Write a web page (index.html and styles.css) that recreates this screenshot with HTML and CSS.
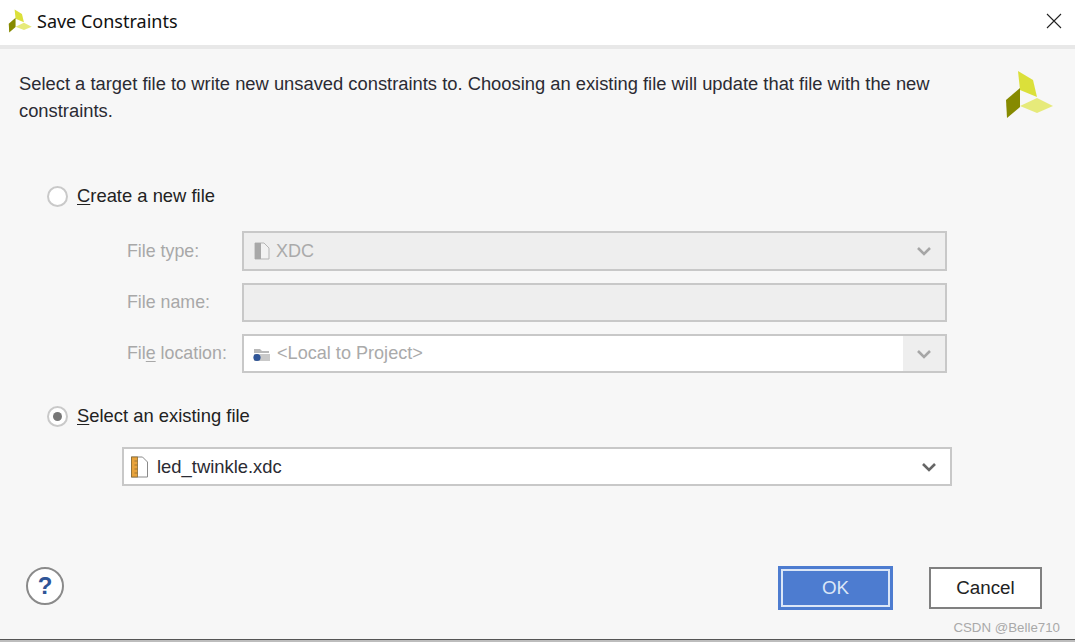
FILE: index.html
```html
<!DOCTYPE html>
<html lang="en">
<head>
  <meta charset="UTF-8">
  <title>Save Constraints</title>
  <link rel="stylesheet" href="styles.css">
</head>
<body>

<div class="dialog">
  <header class="title-bar">
    <svg class="title-logo" viewBox="0 0 48 49">
      <polygon points="13,1 28,10 32,27 15,20" fill="#dbe03a"/>
      <polygon points="15,36 32,28 48,36 32,43" fill="#e6ea7a"/>
      <polygon points="1,30 15,18 15,37 2,48" fill="#868a00"/>
    </svg>
    <span class="title-text">Save Constraints</span>
    <svg class="close-icon" viewBox="0 0 16 16">
      <path d="M1 1 15 15 M15 1 1 15" stroke="#222" stroke-width="1.1" fill="none"/>
    </svg>
  </header>

  <main class="dialog-body">
    <div class="message-row">
      <p class="message">Select a target file to write new unsaved constraints to. Choosing an existing file will update that file with the new constraints.</p>
      <svg class="brand-logo" viewBox="0 0 48 49">
        <polygon points="13,1 28,10 32,27 15,20" fill="#dbe03a"/>
        <polygon points="15,36 32,28 48,36 32,43" fill="#e6ea7a"/>
        <polygon points="1,30 15,18 15,37 2,48" fill="#868a00"/>
      </svg>
    </div>

    <label class="radio-row first">
      <span class="radio"></span>
      <span><u>C</u>reate a new file</span>
    </label>

    <div class="form-grid">
      <span class="field-label">File type:</span>
      <div class="field disabled">
        <svg class="file-icon" viewBox="0 0 16 18">
          <path d="M1 1H10L15 6V17H1Z" fill="#f2f2f2" stroke="#b5b5b5"/>
          <rect x="1" y="1" width="6" height="16" fill="#a8a8a8"/>
        </svg>
        <span class="field-value">XDC</span>
        <svg class="chevron" viewBox="0 0 16 10"><path d="M2 2 8 8 14 2" stroke="#a6a6a6" stroke-width="2.6" fill="none"/></svg>
      </div>

      <span class="field-label">File name:</span>
      <div class="field disabled"></div>

      <span class="field-label">Fil<u>e</u> location:</span>
      <div class="field location">
        <div class="location-value">
          <svg class="folder-icon" viewBox="0 0 18 16">
            <path d="M2 3H8L10 5H17V7H2Z" fill="#b9b9b9"/>
            <rect x="2" y="8" width="16" height="7" fill="#c9c9c9"/>
            <circle cx="5" cy="11.5" r="3.6" fill="#2f5597"/>
          </svg>
          <span class="field-value location-text">&lt;Local to Project&gt;</span>
        </div>
        <div class="location-arrow">
          <svg class="chevron" viewBox="0 0 16 10"><path d="M2 2 8 8 14 2" stroke="#a6a6a6" stroke-width="2.6" fill="none"/></svg>
        </div>
      </div>
    </div>

    <label class="radio-row second">
      <span class="radio checked"></span>
      <span><u>S</u>elect an existing file</span>
    </label>

    <div class="field existing">
      <svg class="file-icon" viewBox="0 0 18 22">
        <path d="M1 1H12L17 6V21H1Z" fill="#fff" stroke="#8a8a8a"/>
        <rect x="1" y="1" width="6" height="20" fill="#e8a33c" stroke="#8a6a30" stroke-width="0.8"/>
        <path d="M4 5H7M4 9H7M4 13H7M4 17H7" stroke="#8a6a30" stroke-width="0.8"/>
      </svg>
      <span class="existing-value">led_twinkle.xdc</span>
      <svg class="chevron" viewBox="0 0 16 10"><path d="M2 2 8 8 14 2" stroke="#666" stroke-width="2.6" fill="none"/></svg>
    </div>

    <footer class="button-row">
      <button class="help-btn" aria-label="Help">?</button>
      <div class="actions">
        <button class="btn btn-ok">OK</button>
        <button class="btn btn-cancel">Cancel</button>
      </div>
    </footer>
  </main>

  <div class="page-edge"></div>
  <span class="watermark">CSDN @Belle710</span>
</div>

</body>
</html>
```

FILE: styles.css
```css
* {
  box-sizing: border-box;
}
body {
  margin: 0;
  font-family: "Liberation Sans", Arial, sans-serif;
  color: #222;
  background-color: #f7f7f7;
}
u {
  text-underline-offset: 2px;
}
.dialog {
  position: relative;
  display: flex;
  flex-direction: column;
  height: 642px;
  overflow: hidden;
}
.title-bar {
  display: flex;
  align-items: center;
  height: 49px;
  padding: 0 13px 4px 8px;
  background-color: #fff;
  border-bottom: 4px solid #e8e8e8;
}
.title-logo {
  width: 24px;
  height: 24px;
}
.title-text {
  margin-left: 5px;
  font-family: "Noto Sans", sans-serif;
  font-size: 18px;
  color: #111;
}
.close-icon {
  width: 16px;
  height: 16px;
  margin-left: auto;
}
.dialog-body {
  flex: 1;
  display: flex;
  flex-direction: column;
  padding: 21px 33px 0 19px;
}
.message-row {
  display: flex;
  justify-content: space-between;
}
.message {
  width: 930px;
  margin: 0;
  font-size: 18.35px;
  line-height: 27px;
  color: #2b2b33;
}
.brand-logo {
  width: 48px;
  height: 49px;
  margin-right: -11px;
}
.radio-row {
  display: flex;
  align-items: center;
  gap: 9px;
  height: 24px;
  margin-left: 28px;
  font-size: 18.4px;
}
.radio-row.first {
  margin-top: 60px;
}
.radio-row.second {
  margin-top: 31px;
}
.radio {
  position: relative;
  width: 21px;
  height: 21px;
  border: 2px solid #c9c9c9;
  border-radius: 50%;
  background-color: #fff;
}
.radio.checked::after {
  content: "";
  position: absolute;
  top: 4px;
  left: 4px;
  width: 9px;
  height: 9px;
  border-radius: 50%;
  background-color: #777;
}
.form-grid {
  display: grid;
  grid-template-columns: 115px 705px;
  grid-template-rows: 40px 39px 39px;
  row-gap: 12px;
  align-items: center;
  margin: 23px 0 0 108px;
}
.field-label {
  font-size: 17.8px;
  color: #a8a8a8;
}
.field {
  display: flex;
  align-items: center;
  height: 100%;
  border: 2px solid #c8c8c8;
}
.field.disabled {
  padding: 0 13px 0 10px;
  background-color: #eee;
}
.field-value {
  margin-left: 6px;
  font-size: 18px;
  color: #aaa;
}
.location-text {
  margin-left: 7px;
  font-size: 18.1px;
}
.file-icon {
  width: 16px;
  height: 18px;
}
.chevron {
  width: 16px;
  height: 10px;
  margin-left: auto;
}
.field.location {
  background-color: #fff;
}
.location-value {
  flex: 1;
  display: flex;
  align-items: center;
  padding-left: 8px;
}
.folder-icon {
  width: 18px;
  height: 16px;
}
.location-arrow {
  display: flex;
  align-items: center;
  width: 42px;
  height: 100%;
  padding: 0 13px;
  background-color: #eee;
}
.field.existing {
  width: 830px;
  height: 39px;
  margin: 19px 0 0 103px;
  padding: 0 13px 0 6px;
  background-color: #fff;
}
.field.existing .file-icon {
  width: 19px;
  height: 22px;
}
.existing-value {
  margin-left: 8px;
  font-size: 18.4px;
  color: #2b2b33;
}
.button-row {
  display: flex;
  align-items: center;
  justify-content: space-between;
  margin: 80px 0 0 7px;
  height: 44px;
}
.help-btn {
  width: 38px;
  height: 38px;
  margin-bottom: 4px;
  padding: 0;
  border: 2px solid #8a8a8a;
  border-radius: 50%;
  background-color: #fff;
  color: #2f5597;
  font-family: "Liberation Sans", Arial, sans-serif;
  font-size: 24px;
  font-weight: bold;
}
.actions {
  display: flex;
  align-items: center;
  gap: 36px;
}
.btn {
  font-family: "Liberation Sans", Arial, sans-serif;
  font-size: 18.8px;
}
.btn-ok {
  width: 115px;
  height: 44px;
  border: 3px solid #4d7cd0;
  outline: 2px solid #dbe6f7;
  outline-offset: -5px;
  background-color: #4d7cd0;
  color: #dbe6f7;
}
.btn-cancel {
  width: 113px;
  height: 42px;
  border: 2px solid #808080;
  background-color: #fff;
  color: #222;
}
.page-edge {
  height: 3px;
  border-top: 1px solid #555;
  background-color: #bdbdbd;
}
.watermark {
  position: absolute;
  right: 15px;
  bottom: 7px;
  font-size: 13.3px;
  color: #a9a9a9;
}
```
